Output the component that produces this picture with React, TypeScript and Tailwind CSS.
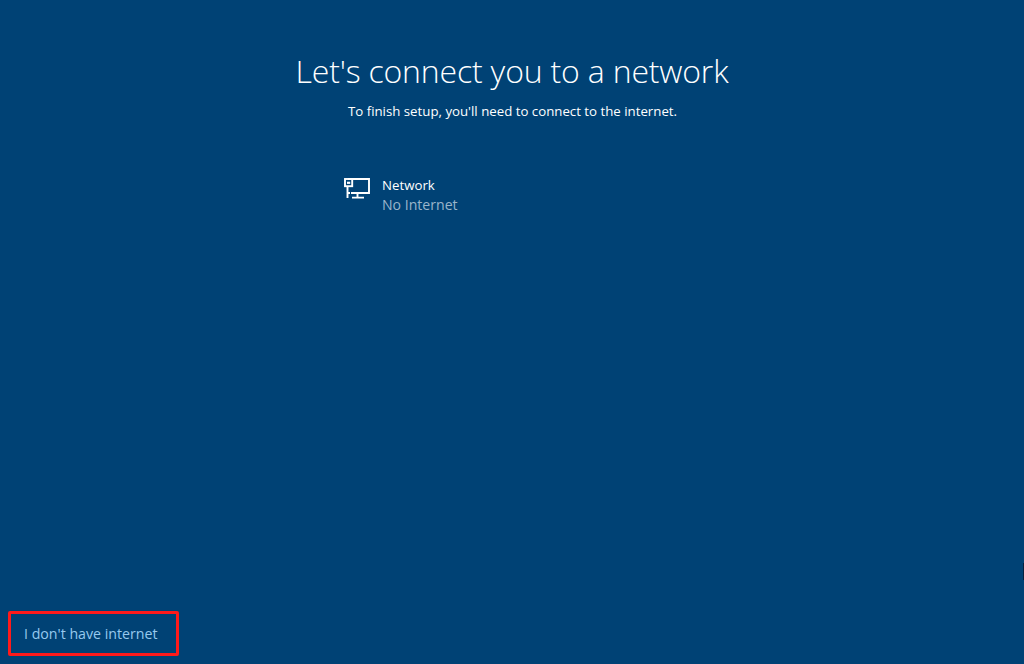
function NetworkIcon() {
  return (
    <svg width="26" height="21" viewBox="0 0 26 21" fill="none" stroke="white" strokeWidth="1.9" className="shrink-0">
      <path d="M4 1H25V15H7" />
      <rect x="1" y="1" width="7.2" height="7.2" />
      <path d="M3 4.8H6.2" strokeWidth="2.2" />
      <path d="M3.5 8V20M3.5 15H6M13.5 15V19.6M8 19.6H20" />
    </svg>
  );
}

export default function App() {
  return (
    <div className="relative flex h-[664px] w-[1024px] flex-col overflow-hidden bg-[#004275] font-['Open_Sans',sans-serif] text-white">
      <div className="flex flex-col items-center pt-[48px]">
        <h1 className="text-[32px] leading-[46px] font-light tracking-[-0.18px]">Let's connect you to a network</h1>
        <p className="mt-[7px] pl-px text-[13.25px] leading-[20px]">To finish setup, you'll need to connect to the internet.</p>
      </div>

      <div className="mt-[54px] flex items-start gap-[12px] pl-[344px]">
        <div className="pt-[3px]">
          <NetworkIcon />
        </div>
        <div>
          <div className="text-[13.25px] leading-[20px]">Network</div>
          <div className="text-[14.1px] leading-[20px] text-[#9ab5cb]">No Internet</div>
        </div>
      </div>

      <div className="mt-auto mb-[8px] ml-[8px] flex h-[45px] w-[171px] items-center rounded-[2px] border-[3px] border-[#ff1a1a] pl-[13px]">
        <button className="text-[14.2px] leading-[20px] text-[#97c9ee]">I don't have internet</button>
      </div>

      <div className="absolute top-[563px] right-0 h-[17px] w-px bg-[#04213f]" />
    </div>
  );
}
